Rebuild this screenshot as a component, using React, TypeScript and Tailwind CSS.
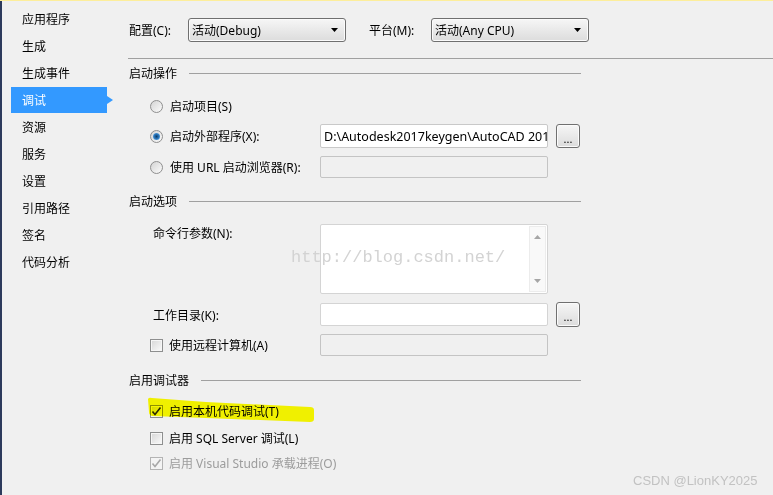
import React from 'react'

const navItems = ['应用程序', '生成', '生成事件', '调试', '资源', '服务', '设置', '引用路径', '签名', '代码分析']

const ArrowDown = ({ color = '#000' }: { color?: string }) => (
  <svg width="7" height="4" viewBox="0 0 7 4">
    <path d="M0 0 L7 0 L3.5 4 Z" fill={color} />
  </svg>
)

// 文字整体下移 1px，贴近原图基线
const Txt = ({ children, className = '' }: { children: React.ReactNode; className?: string }) => (
  <span className={`pt-[2px] ${className}`}>{children}</span>
)

function Select({ value }: { value: string }) {
  return (
    <div className="w-[158px] h-[24px] rounded-[3px] border border-[#707070] bg-[linear-gradient(#f6f6f6,#dcdcdc)] shadow-[inset_0_0_0_1px_#fbfbfb] flex items-center justify-between pl-[3px] pr-[7px]">
      <Txt>{value}</Txt>
      <ArrowDown />
    </div>
  )
}

function BrowseButton({ h = 'h-[24px]' }: { h?: string }) {
  return (
    <div className={`ml-[8px] w-[24px] ${h} rounded-[3px] border border-[#707070] bg-[linear-gradient(#f6f6f6,#dcdcdc)] shadow-[inset_0_0_0_1px_#fbfbfb] flex items-center justify-center text-[11px] leading-none pt-[4px]`}>
      ...
    </div>
  )
}

function Radio({ checked }: { checked?: boolean }) {
  return (
    <div className="w-[13px] h-[13px] rounded-full border border-[#8f8f8f] bg-[linear-gradient(135deg,#d4d4d4,#fbfbfb)] flex items-center justify-center">
      {checked && (
        <div className="w-[7px] h-[7px] rounded-full bg-[radial-gradient(circle,#0c3a66_0%,#2f7fc6_55%,#a9cdee_100%)]" />
      )}
    </div>
  )
}

function Checkbox({ checked, disabled }: { checked?: boolean; disabled?: boolean }) {
  return (
    <div
      className={`w-[13px] h-[13px] border flex items-center justify-center ${
        disabled
          ? 'border-[#b4b4b4] bg-[#f4f4f4]'
          : 'border-[#8e8f8f] bg-[linear-gradient(135deg,#d6d6d6,#fbfbfb)] shadow-[inset_0_0_0_1px_#f6f6f6]'
      }`}
    >
      {checked && (
        <svg width="11" height="11" viewBox="0 0 11 11">
          <path
            d="M1.5 5.5 L4 8.5 L9.5 1.5"
            fill="none"
            stroke={disabled ? '#a8a8a8' : '#2a2a2a'}
            strokeWidth="1.6"
          />
        </svg>
      )}
    </div>
  )
}

function SectionHeader({ title }: { title: string }) {
  return (
    <div className="h-[16px] flex items-center pl-px">
      <Txt>{title}</Txt>
      <div className="flex-1 h-px bg-[#a0a0a0] ml-[12px]" />
    </div>
  )
}

export default function App() {
  return (
    <div className="w-[773px] h-[495px] bg-[#f0f0f0] relative overflow-hidden text-[12px] leading-4 text-black font-['Noto_Sans','Noto_Sans_CJK_SC',sans-serif]">
      <div className="h-px bg-[#fdee9b]" />
      <div className="flex h-[494px]">
        <div className="w-[2px] bg-[#2c3a5c]" />

        {/* 左侧导航 */}
        <nav className="w-[126px] pt-[5px] flex flex-col gap-px">
          {navItems.map((item) => {
            const active = item === '调试'
            return (
              <div
                key={item}
                className={`relative ml-[9px] w-[96px] h-[26px] flex items-center pl-[11px] ${
                  active ? 'bg-[#3399ff] text-white' : ''
                }`}
              >
                <Txt>{item}</Txt>
                {active && (
                  <div className="absolute right-[-6px] top-[9px] w-0 h-0 border-l-[6px] border-l-[#3399ff] border-y-[4px] border-y-transparent" />
                )}
              </div>
            )
          })}
        </nav>

        {/* 主内容 */}
        <div className="flex-1 flex flex-col">
          <div className="mt-[17px] h-[24px] flex items-center pl-px">
            <Txt className="w-[59px]">配置(C):</Txt>
            <Select value="活动(Debug)" />
            <Txt className="ml-[23px] w-[62px]">平台(M):</Txt>
            <Select value="活动(Any CPU)" />
          </div>

          <div className="mt-[16px] h-px bg-[#a0a0a0]" />

          <div className="w-[453px] flex flex-col">
            <div className="mt-[6px]">
              <SectionHeader title="启动操作" />
            </div>

            <div className="mt-[13px] h-[24px] flex items-center">
              <div className="w-[192px] pl-[22px] flex items-center gap-[7px]">
                <Radio />
                <Txt>启动项目(S)</Txt>
              </div>
            </div>

            <div className="mt-[6px] h-[24px] flex items-center">
              <div className="w-[192px] pl-[22px] flex items-center gap-[7px]">
                <Radio checked />
                <Txt>启动外部程序(X):</Txt>
              </div>
              <div className="w-[228px] h-[24px] bg-white border border-[#c9c9c9] rounded-[2px] flex items-center pl-[3px] overflow-hidden whitespace-nowrap text-[12.5px]">
                <Txt>D:\Autodesk2017keygen\AutoCAD 201</Txt>
              </div>
              <BrowseButton />
            </div>

            <div className="mt-[7px] h-[24px] flex items-center">
              <div className="w-[192px] pl-[22px] flex items-center gap-[7px]">
                <Radio />
                <Txt>使用 URL 启动浏览器(R):</Txt>
              </div>
              <div className="w-[228px] h-[22px] bg-[#f0f0f0] border border-[#c4c4c4] rounded-[2px]" />
            </div>

            <div className="mt-[14px]">
              <SectionHeader title="启动选项" />
            </div>

            <div className="mt-[15px] flex">
              <div className="w-[192px] pl-[25px] pt-[2px]">命令行参数(N):</div>
              <div className="w-[228px] h-[70px] bg-white border border-[#d4d4d4] rounded-[2px] flex">
                <div className="flex-1" />
                <div className="w-[17px] my-px mr-px bg-[#f9f9f9] border border-[#ececec] flex flex-col items-center justify-between py-[8px]">
                  <svg width="7" height="4" viewBox="0 0 7 4">
                    <path d="M0 4 L7 4 L3.5 0 Z" fill="#a6a6a6" />
                  </svg>
                  <ArrowDown color="#a6a6a6" />
                </div>
              </div>
            </div>

            <div className="mt-[8px] h-[25px] flex items-center">
              <Txt className="w-[192px] pl-[25px]">工作目录(K):</Txt>
              <div className="w-[228px] h-[23px] bg-white border border-[#d4d4d4] rounded-[2px]" />
              <BrowseButton h="h-[25px]" />
            </div>

            <div className="mt-[6px] h-[24px] flex items-center">
              <div className="w-[192px] pl-[22px] flex items-center gap-[6px]">
                <Checkbox />
                <Txt>使用远程计算机(A)</Txt>
              </div>
              <div className="w-[228px] h-[22px] bg-[#f0f0f0] border border-[#c4c4c4] rounded-[2px]" />
            </div>

            <div className="mt-[15px]">
              <SectionHeader title="启用调试器" />
            </div>

            <div className="mt-[13px] h-[20px] pl-[22px] flex items-center gap-[6px]">
              <Checkbox checked />
              <Txt>启用本机代码调试(T)</Txt>
            </div>
            <div className="mt-[7px] h-[20px] pl-[22px] flex items-center gap-[6px]">
              <Checkbox />
              <Txt>启用 SQL Server 调试(L)</Txt>
            </div>
            <div className="mt-[5px] h-[20px] pl-[22px] flex items-center gap-[6px] text-[#9c9c9c]">
              <Checkbox checked disabled />
              <Txt>启用 Visual Studio 承载进程(O)</Txt>
            </div>
          </div>
        </div>
      </div>

      {/* 荧光笔标记 */}
      <svg
        className="absolute left-[146px] top-[396px] mix-blend-multiply pointer-events-none"
        width="172"
        height="28"
        viewBox="0 0 172 28"
      >
        <path
          d="M2 3 Q3 1 6 2 L60 6 L164 11 Q168 11 168 14 L168 23 Q168 26 164 26 L60 22 L6 20 Q3 19 3 16 Z"
          fill="#ffff00"
        />
      </svg>

      {/* 水印 */}
      <div className="absolute left-[291px] top-[248px] text-[17px] leading-5 text-[#d3d3d3] font-['Liberation_Mono',monospace] pointer-events-none">
        http://blog.csdn.net/
      </div>
      <div className="absolute left-[633px] top-[473px] text-[13px] leading-4 text-[#c2c2c2] font-['Liberation_Sans',sans-serif] pointer-events-none">
        CSDN @LionKY2025
      </div>
    </div>
  )
}
